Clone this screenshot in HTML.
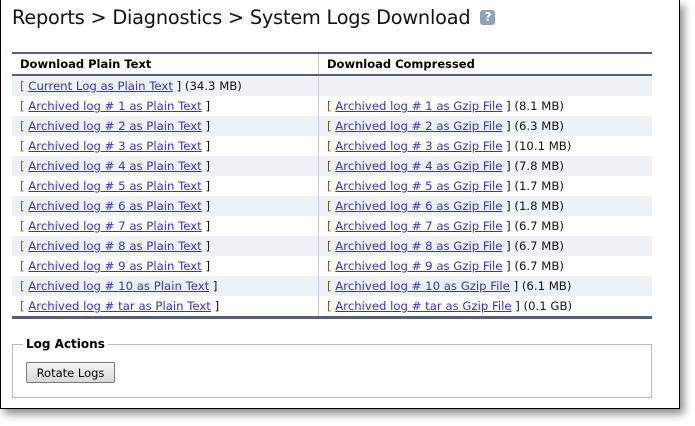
<!DOCTYPE html>
<html><head><style>
body{margin:0;width:695px;height:426px;background:#fff;position:relative;overflow:hidden;font-family:"DejaVu Sans","Liberation Sans",sans-serif;}
#frame{position:absolute;left:0;top:0;width:678px;height:408px;border:1px solid #000;border-top:none;box-shadow:4px 5px 8px rgba(0,0,0,0.45);background:#fff;}
h1{position:absolute;left:11px;top:6px;margin:0;font-weight:normal;font-size:19.3px;color:#111;white-space:nowrap;letter-spacing:-0.2px;}
.q{display:inline-block;width:15px;height:15px;background:#8fa0c0;border-radius:3px;color:#fff;font-size:12px;text-align:center;line-height:15px;vertical-align:3px;margin-left:10px;font-weight:bold;}
table{position:absolute;left:11px;top:52px;width:640px;border-collapse:collapse;font-size:11.7px;border-top:2px solid #556080;border-bottom:3px solid #556080;}
th{text-align:left;height:20px;padding:0 0 0 8px;border-bottom:2px solid #556080;font-size:11.5px;}
td{height:20px;padding:0 0 0 8px;white-space:nowrap;color:#111;}
td+td,th+th{border-left:1px solid #ccd;}
tr.a td{background:#eef1f6;}
a{color:#3333cc;text-decoration:underline;}
b.br{font-weight:normal;color:#7a5a20;}
#fs{position:absolute;left:11px;top:344px;width:638px;height:52px;border:1px solid #bbb;}
#lg{position:absolute;left:10px;top:-9px;background:#fff;padding:0 3px;font-weight:bold;font-size:12px;line-height:16px;}
button{position:absolute;left:13px;top:17px;width:89px;height:21px;font-family:inherit;font-size:11.5px;border:1px solid #777;border-radius:2px;background:linear-gradient(#f6f6f6,#d8d8d8);padding:0;}
</style></head><body>
<div id="frame">
<h1>Reports &gt; Diagnostics &gt; System Logs Download<span class="q">?</span></h1>
<table>
<tr><th style="width:298px">Download Plain Text</th><th>Download Compressed</th></tr>
<tr class="a"><td><b class="br">[</b> <a>Current Log as Plain Text</a> ] (34.3 MB)</td><td></td></tr>
<tr><td><b class="br">[</b> <a>Archived log # 1 as Plain Text</a> ]</td><td><b class="br">[</b> <a>Archived log # 1 as Gzip File</a> ] (8.1 MB)</td></tr>
<tr class="a"><td><b class="br">[</b> <a>Archived log # 2 as Plain Text</a> ]</td><td><b class="br">[</b> <a>Archived log # 2 as Gzip File</a> ] (6.3 MB)</td></tr>
<tr><td><b class="br">[</b> <a>Archived log # 3 as Plain Text</a> ]</td><td><b class="br">[</b> <a>Archived log # 3 as Gzip File</a> ] (10.1 MB)</td></tr>
<tr class="a"><td><b class="br">[</b> <a>Archived log # 4 as Plain Text</a> ]</td><td><b class="br">[</b> <a>Archived log # 4 as Gzip File</a> ] (7.8 MB)</td></tr>
<tr><td><b class="br">[</b> <a>Archived log # 5 as Plain Text</a> ]</td><td><b class="br">[</b> <a>Archived log # 5 as Gzip File</a> ] (1.7 MB)</td></tr>
<tr class="a"><td><b class="br">[</b> <a>Archived log # 6 as Plain Text</a> ]</td><td><b class="br">[</b> <a>Archived log # 6 as Gzip File</a> ] (1.8 MB)</td></tr>
<tr><td><b class="br">[</b> <a>Archived log # 7 as Plain Text</a> ]</td><td><b class="br">[</b> <a>Archived log # 7 as Gzip File</a> ] (6.7 MB)</td></tr>
<tr class="a"><td><b class="br">[</b> <a>Archived log # 8 as Plain Text</a> ]</td><td><b class="br">[</b> <a>Archived log # 8 as Gzip File</a> ] (6.7 MB)</td></tr>
<tr><td><b class="br">[</b> <a>Archived log # 9 as Plain Text</a> ]</td><td><b class="br">[</b> <a>Archived log # 9 as Gzip File</a> ] (6.7 MB)</td></tr>
<tr class="a"><td><b class="br">[</b> <a>Archived log # 10 as Plain Text</a> ]</td><td><b class="br">[</b> <a>Archived log # 10 as Gzip File</a> ] (6.1 MB)</td></tr>
<tr><td><b class="br">[</b> <a>Archived log # tar as Plain Text</a> ]</td><td><b class="br">[</b> <a>Archived log # tar as Gzip File</a> ] (0.1 GB)</td></tr>
</table>
<div id="fs"><div id="lg">Log Actions</div><button>Rotate Logs</button></div>
</div>
</body></html>
